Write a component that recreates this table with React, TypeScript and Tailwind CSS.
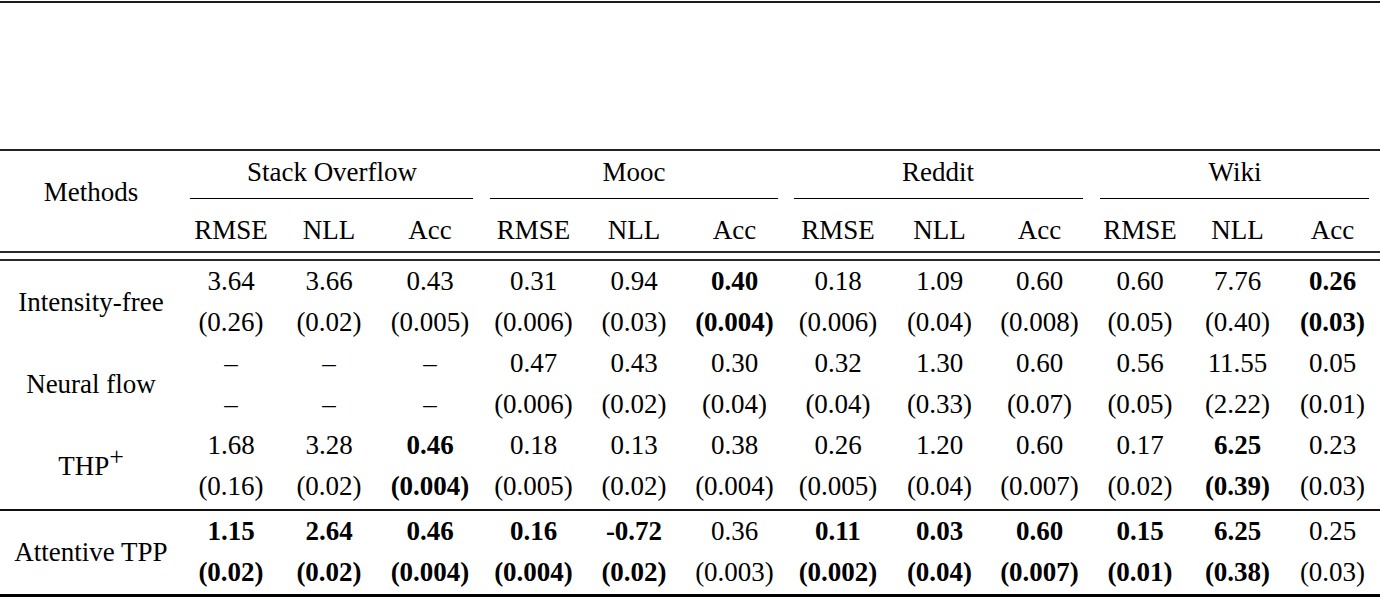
import type { ReactNode } from 'react'

type Cell = { v: string; b?: boolean }

interface MethodRow {
  label: ReactNode
  values: Cell[]
  stds: Cell[]
}

const cols =
  "grid grid-cols-[182px_98px_98px_104px_103px_98px_103px_104px_99px_101px_100px_95px_95px] font-['Liberation_Serif']"

const parse = (s: string): Cell[] =>
  s.split(' ').map((t) => (t.startsWith('*') ? { v: t.slice(1), b: true } : { v: t }))

const rows: MethodRow[] = [
  {
    label: 'Intensity-free',
    values: parse('3.64 3.66 0.43 0.31 0.94 *0.40 0.18 1.09 0.60 0.60 7.76 *0.26'),
    stds: parse('(0.26) (0.02) (0.005) (0.006) (0.03) *(0.004) (0.006) (0.04) (0.008) (0.05) (0.40) *(0.03)'),
  },
  {
    label: 'Neural flow',
    values: parse('– – – 0.47 0.43 0.30 0.32 1.30 0.60 0.56 11.55 0.05'),
    stds: parse('– – – (0.006) (0.02) (0.04) (0.04) (0.33) (0.07) (0.05) (2.22) (0.01)'),
  },
  {
    label: (
      <span>
        THP<span className="relative -top-[10px] text-[26px]">+</span>
      </span>
    ),
    values: parse('1.68 3.28 *0.46 0.18 0.13 0.38 0.26 1.20 0.60 0.17 *6.25 0.23'),
    stds: parse('(0.16) (0.02) *(0.004) (0.005) (0.02) (0.004) (0.005) (0.04) (0.007) (0.02) *(0.39) (0.03)'),
  },
]

const ours: MethodRow = {
  label: 'Attentive TPP',
  values: parse('*1.15 *2.64 *0.46 *0.16 *-0.72 0.36 *0.11 *0.03 *0.60 *0.15 *6.25 0.25'),
  stds: parse('*(0.02) *(0.02) *(0.004) *(0.004) *(0.02) (0.003) *(0.002) *(0.04) *(0.007) *(0.01) *(0.38) (0.03)'),
}

function MethodBlock({ row }: { row: MethodRow }) {
  return (
    <div className={`${cols} grid-rows-[41px_41px] leading-[41px]`}>
      <div className="col-start-1 row-start-1 row-span-2 flex items-center justify-center">{row.label}</div>
      {row.values.map((c, i) => (
        <div key={`v${i}`} className={`row-start-1 text-center ${c.b ? 'font-bold' : ''}`}>
          {c.v}
        </div>
      ))}
      {row.stds.map((c, i) => (
        <div key={`s${i}`} className={`row-start-2 text-center ${c.b ? 'font-bold' : ''}`}>
          {c.v}
        </div>
      ))}
    </div>
  )
}

const groups = [
  { name: 'Stack Overflow', start: 'col-start-2', trim: 'ml-[8px] mr-[9px]' },
  { name: 'Mooc', start: 'col-start-5', trim: 'ml-[8px] mr-[8px]' },
  { name: 'Reddit', start: 'col-start-8', trim: 'ml-[8px] mr-[7px]' },
  { name: 'Wiki', start: 'col-start-11', trim: 'ml-[10px] mr-[11px]' },
]

export default function App() {
  return (
    <div className="[font-family:'Liberation_Serif'] w-[1380px] h-[600px] bg-white text-black text-[27px]">
      <div className="pt-px">
        <div className="h-[2px] bg-[#1a1a1a]" />
      </div>

      <div className="mt-[146px]">
        <div className="h-[2px] bg-[#222]" />

        {/* header */}
        <div className={`${cols} grid-rows-[47px_1px_52px] leading-[41px]`}>
          <div className="col-start-1 row-start-1 row-span-3 pt-[21px] text-center">Methods</div>
          {groups.map((g) => (
            <div key={g.name} className={`${g.start} col-span-3 row-start-1 pt-px text-center`}>
              {g.name}
            </div>
          ))}
          {groups.map((g) => (
            <div key={`r${g.name}`} className={`${g.start} col-span-3 row-start-2 bg-black ${g.trim}`} />
          ))}
          {groups.flatMap((g) =>
            ['RMSE', 'NLL', 'Acc'].map((m) => (
              <div key={`${g.name}${m}`} className="row-start-3 pt-[11px] text-center">
                {m}
              </div>
            )),
          )}
        </div>

        <div className="h-[2px] bg-[#2a2a2a]" />
        <div className="mt-[6px] h-[2px] bg-[#2a2a2a]" />

        {rows.map((r, i) => (
          <MethodBlock key={i} row={r} />
        ))}

        <div className="mt-[2px] h-[2px] bg-[#111]" />
        <MethodBlock row={ours} />
        <div className="mt-px h-[3px] bg-black" />
      </div>
    </div>
  )
}
